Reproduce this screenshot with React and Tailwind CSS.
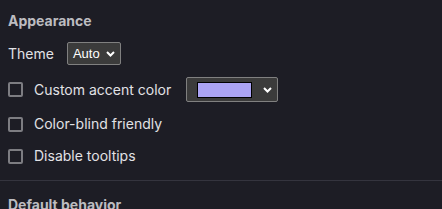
import React from 'react';

const Chevron = () => (
    <svg width="9" height="6" viewBox="0 0 9 6" className="shrink-0">
        <path d="M1 1l3.5 3.5L8 1" fill="none" stroke="#ffffff" strokeWidth="2" />
    </svg>
);

const Checkbox = () => (
    <span className="block h-[15px] w-[15px] shrink-0 rounded-[2px] border-2 border-[#7d7d82]" />
);

const CheckRow = ({ label, children }) => (
    <div className="flex min-h-[20px] items-center">
        <Checkbox />
        <span className="ml-[11px] text-[14px] leading-[20px] text-[#e2e2e6]">{label}</span>
        {children}
    </div>
);

export default function App() {
    return (
        <div className="h-[209px] w-[442px] overflow-hidden bg-[#1d1d25] font-['Inter',sans-serif]">
            <div className="flex flex-col gap-[12px] px-[8px] pt-[12px]">
                <h2 className="text-[14px] font-bold leading-[18px] text-[#bcbcc0]">Appearance</h2>

                <div className="flex h-[23px] items-center">
                    <span className="text-[14px] leading-[20px] text-[#e2e2e6]">Theme</span>
                    <div className="ml-[13px] flex h-[23px] w-[54px] items-center justify-between rounded-[2px] border border-[#808080] bg-[#3b3b3b] pl-[5px] pr-[5px] font-['Liberation_Sans',sans-serif] text-[13px] text-white">
                        <span>Auto</span>
                        <Chevron />
                    </div>
                </div>

                <CheckRow label="Custom accent color">
                    <div className="ml-[15px] flex h-[25px] w-[92px] items-center justify-between rounded-[2px] border border-[#808080] bg-[#3b3b3b] pl-[10px] pr-[5px]">
                        <span className="block h-[16px] w-[55px] border border-black bg-[#aba3f4]" />
                        <Chevron />
                    </div>
                </CheckRow>
                <CheckRow label="Color-blind friendly" />
                <CheckRow label="Disable tooltips" />
            </div>

            <div className="mt-[14px] border-t border-[#34343e]" />

            <div className="px-[8px] pt-[15px]">
                <h2 className="text-[14px] font-bold leading-[18px] text-[#bcbcc0]">Default behavior</h2>
            </div>
        </div>
    );
}
